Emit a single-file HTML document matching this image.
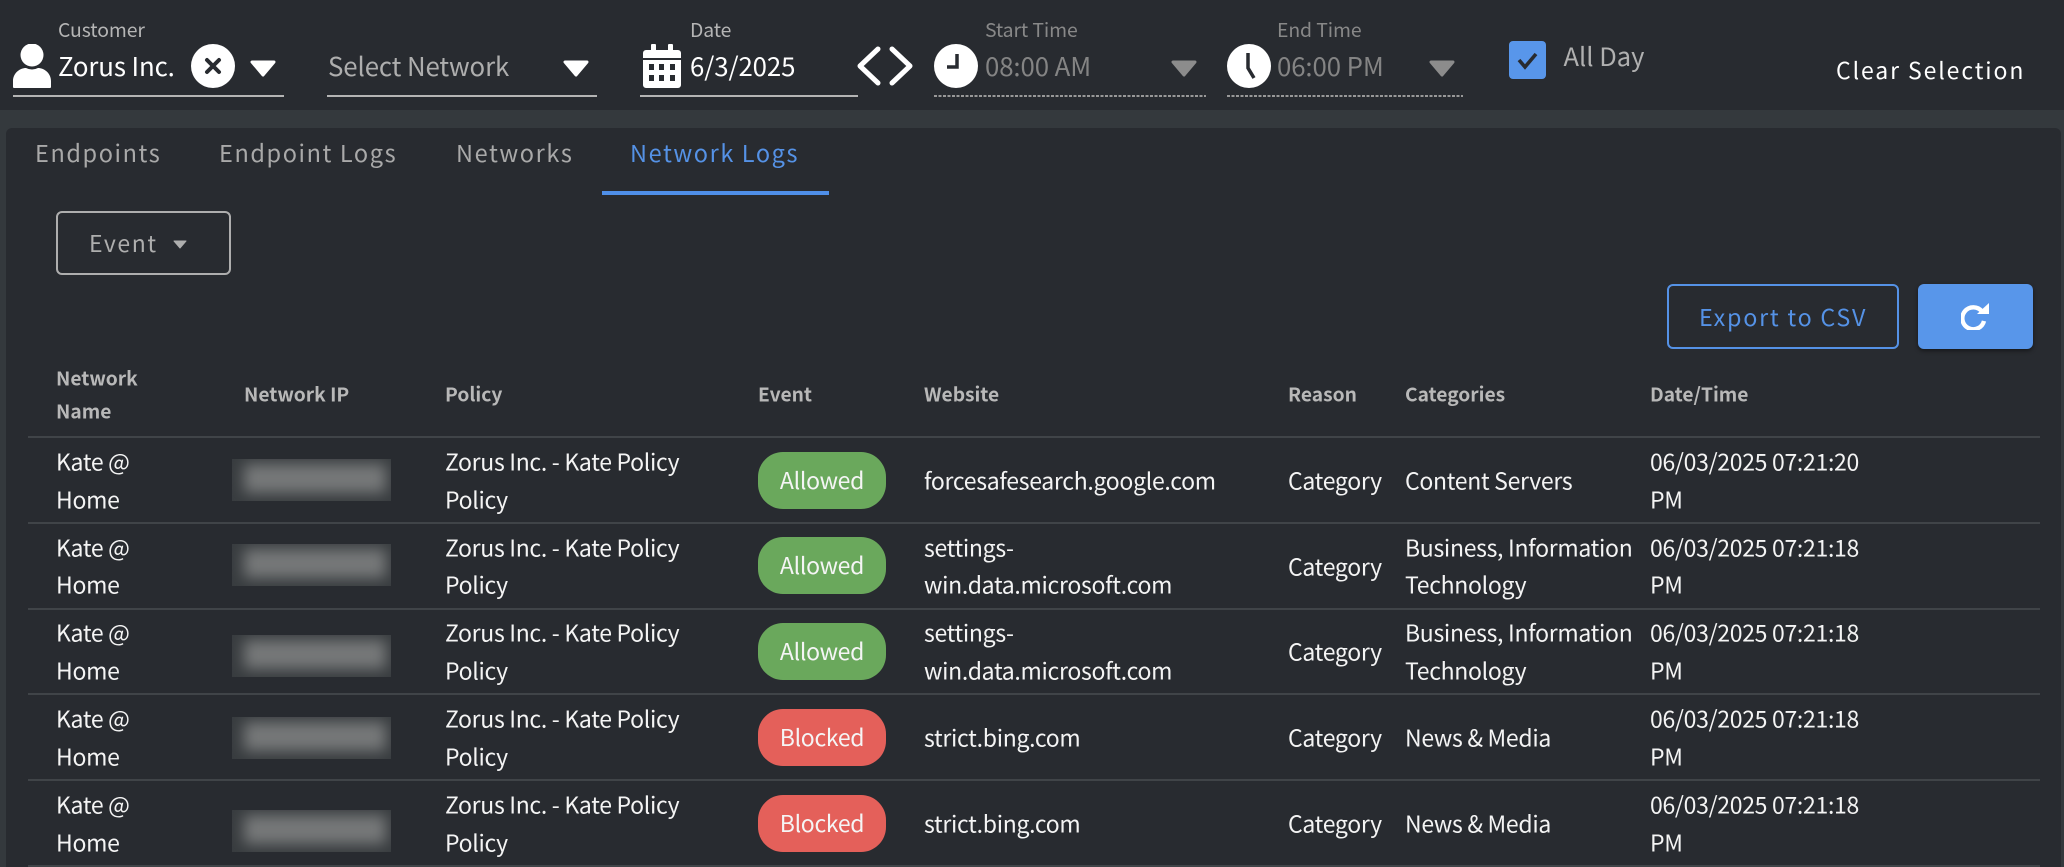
<!DOCTYPE html>
<html><head><meta charset="utf-8"><title>Network Logs</title>
<style>
html,body{margin:0;padding:0;background:#34393d;}
body{position:relative;width:2064px;height:867px;overflow:hidden;font-family:"Noto Sans CJK JP","Liberation Sans",sans-serif;color:#fff}
div,span,svg{position:absolute}
.t{white-space:nowrap;line-height:40px;height:40px}
.b{font-size:23px;letter-spacing:-.3px;color:#f4f4f4;transform:translateY(-1.5px)}
.h{font-size:19.2px;font-weight:700;color:#b8b8b8;transform:translateY(-.7px)}
.l{font-size:19.4px;letter-spacing:-.1px;color:#b5b5b5;transform:translateY(-.8px)}
.m{font-size:25.8px;letter-spacing:-.1px;transform:translateY(-.8px)}
.tab{font-size:23.5px;letter-spacing:1.6px;color:#a9a9a9}
.ul{height:2px;background:#b4b4b4;top:95px}
.dash{height:2px;top:95px;background:repeating-linear-gradient(90deg,#989898 0 3px,transparent 3px 4.5px)}
.line{left:28px;width:2012px;height:2px;background:#404448}
.pill{left:758px;width:128px;height:57px;border-radius:25px;text-align:center;font-size:23px;letter-spacing:-.3px;line-height:54px;color:#f5f5f5}
.al{background:#6aa85c}
.bl{background:#e4605a}
.blur{left:232px;width:159px;height:42px;overflow:hidden;background:#383c3f}
.blur i{position:absolute;left:12px;right:5px;top:5px;bottom:8px;background:#767879;filter:blur(7px);display:block}
</style></head><body>
<div style="left:0;top:0;width:2064px;height:110px;background:#282b30"></div>
<div style="left:6px;top:128px;width:2055px;height:739px;background:#282b30;border-radius:6px 6px 0 0"></div>

<svg style="left:13px;top:44px" width="38" height="44" viewBox="0 0 38 44"><ellipse cx="19" cy="11" rx="11.5" ry="11.5" fill="#fff"/><path d="M1 44a1 1 0 0 1-1-1v-6C0 29 7 24 13 24q6 3 12 0c6 0 13 5 13 13v6a1 1 0 0 1-1 1z" fill="#fff"/></svg>
<div class="t l" style="left:58px;top:10px">Customer</div>
<div class="t m" style="left:58px;top:47px">Zorus Inc.</div>
<svg style="left:191px;top:44px" width="44" height="44" viewBox="0 0 44 44"><circle cx="22" cy="22" r="22" fill="#fff"/><path d="M16 16l12 12M28 16L16 28" stroke="#282b30" stroke-width="4" stroke-linecap="round"/></svg>
<svg style="left:249px;top:60px" width="28" height="18" viewBox="0 0 28 18"><path d="M3 2h22L14 15z" fill="#fff" stroke="#fff" stroke-width="3" stroke-linejoin="round"/></svg>
<div class="ul" style="left:13px;width:271px"></div>

<div class="t m" style="left:328px;top:47px;color:#aeaeae">Select Network</div>
<svg style="left:562px;top:60px" width="28" height="18" viewBox="0 0 28 18"><path d="M3 2h22L14 15z" fill="#fff" stroke="#fff" stroke-width="3" stroke-linejoin="round"/></svg>
<div class="ul" style="left:327px;width:270px"></div>

<svg style="left:643px;top:44px" width="38" height="44" viewBox="0 0 38 44"><path d="M9 0h3a1 1 0 0 1 1 1v5h12V1a1 1 0 0 1 1-1h3a1 1 0 0 1 1 1v5h5a3 3 0 0 1 3 3v5H0V9a3 3 0 0 1 3-3h5V1a1 1 0 0 1 1-1z" fill="#fff"/><path fill-rule="evenodd" d="M0 16h38v25a3 3 0 0 1-3 3H3a3 3 0 0 1-3-3zM6 20v6h5v-6zM16 20v6h5v-6zM27 20v6h5v-6zM6 31v6h5v-6zM16 31v6h5v-6zM27 31v6h5v-6z" fill="#fff"/></svg>
<div class="t l" style="left:690px;top:10px">Date</div>
<div class="t m" style="left:690px;top:47px">6/3/2025</div>
<div class="ul" style="left:640px;width:218px"></div>

<svg style="left:857px;top:46px" width="56" height="40" viewBox="0 0 56 40"><path d="M21 3L3 20l18 17M35 3l18 17-18 17" fill="none" stroke="#fff" stroke-width="5" stroke-linecap="round" stroke-linejoin="round"/></svg>

<svg style="left:934px;top:44px" width="44" height="44" viewBox="0 0 44 44"><circle cx="22" cy="22" r="22" fill="#fff"/><path d="M23 10v13h-10" fill="none" stroke="#282b30" stroke-width="3.5"/></svg>
<div class="t l" style="left:985px;top:10px;color:#888">Start Time</div>
<div class="t m" style="left:985px;top:47px;color:#848484">08:00 AM</div>
<svg style="left:1170px;top:60px" width="28" height="18" viewBox="0 0 28 18"><path d="M3 2h22L14 15z" fill="#8c8c8c" stroke="#8c8c8c" stroke-width="3" stroke-linejoin="round"/></svg>
<div class="dash" style="left:934px;width:272px"></div>

<svg style="left:1227px;top:44px" width="44" height="44" viewBox="0 0 44 44"><circle cx="22" cy="22" r="22" fill="#fff"/><path d="M21 9v15l6 10" fill="none" stroke="#282b30" stroke-width="3.5"/></svg>
<div class="t l" style="left:1277px;top:10px;color:#888">End Time</div>
<div class="t m" style="left:1277px;top:47px;color:#848484">06:00 PM</div>
<svg style="left:1428px;top:60px" width="28" height="18" viewBox="0 0 28 18"><path d="M3 2h22L14 15z" fill="#8c8c8c" stroke="#8c8c8c" stroke-width="3" stroke-linejoin="round"/></svg>
<div class="dash" style="left:1227px;width:236px"></div>

<div style="left:1509px;top:41px;width:37px;height:38px;background:#5896ea;border-radius:4px"></div>
<svg style="left:1509px;top:41px" width="37" height="38" viewBox="0 0 37 38"><path d="M10 19l6 7 11-13" fill="none" stroke="#282b30" stroke-width="3.6"/></svg>
<div class="t" style="left:1563.5px;top:35.5px;color:#b0b0b0;font-size:25.5px">All Day</div>
<div class="t" style="left:1836px;top:49px;font-size:23px;letter-spacing:1.9px;color:#fff">Clear Selection</div>

<div class="t tab" style="left:35px;top:131.5px">Endpoints</div>
<div class="t tab" style="left:219px;top:131.5px">Endpoint Logs</div>
<div class="t tab" style="left:456px;top:131.5px">Networks</div>
<div class="t tab" style="left:630px;top:131.5px;color:#5592e6">Network Logs</div>
<div style="left:602px;top:191px;width:227px;height:4px;background:#4f8fe8"></div>

<div style="left:56px;top:211px;width:171px;height:60px;border:2px solid #aeaeae;border-radius:6px"></div>
<div class="t tab" style="left:89px;top:222px;font-size:23px;color:#aeaeae">Event</div>
<svg style="left:173px;top:240px" width="14" height="9" viewBox="0 0 14 9"><path d="M1 1h12L7 8z" fill="#aeaeae" stroke="#aeaeae" stroke-linejoin="round"/></svg>

<div style="left:1667px;top:284px;width:228px;height:61px;border:2px solid #5592e6;border-radius:6px"></div>
<div class="t tab" style="left:1699px;top:296px;font-size:23.3px;letter-spacing:1.75px;color:#5592e6">Export to CSV</div>
<div style="left:1918px;top:284px;width:115px;height:65px;background:#5896ea;border-radius:6px;box-shadow:0 2px 4px rgba(0,0,0,.45)"></div>
<svg style="left:1961px;top:302px" width="30" height="28" viewBox="0 0 30 28"><path d="M21 9.5A11 11 0 1 0 23 19" fill="none" stroke="#fff" stroke-width="4.4"/><path d="M16 12h12V1z" fill="#fff"/></svg>

<div class="t h" style="left:56px;top:358px">Network</div>
<div class="t h" style="left:56px;top:391px">Name</div>
<div class="t h" style="left:244px;top:374px">Network IP</div>
<div class="t h" style="left:445px;top:374px">Policy</div>
<div class="t h" style="left:758px;top:374px">Event</div>
<div class="t h" style="left:924px;top:374px">Website</div>
<div class="t h" style="left:1288px;top:374px">Reason</div>
<div class="t h" style="left:1405px;top:374px">Categories</div>
<div class="t h" style="left:1650px;top:374px">Date/Time</div>

<div class="line" style="top:436px"></div>
<div class="line" style="top:522px"></div>
<div class="line" style="top:608px"></div>
<div class="line" style="top:693px"></div>
<div class="line" style="top:779px"></div>
<div class="line" style="top:865px"></div>

<!-- Row 1 -->
<div class="t b" style="left:56px;top:442px">Kate @</div>
<div class="t b" style="left:56px;top:480px">Home</div>
<div class="blur" style="top:459px"><i></i></div>
<div class="t b" style="left:445px;top:442px">Zorus Inc. - Kate Policy</div>
<div class="t b" style="left:445px;top:480px">Policy</div>
<div class="pill al" style="top:452px">Allowed</div>
<div class="t b" style="left:924px;top:461px">forcesafesearch.google.com</div>
<div class="t b" style="left:1288px;top:461px">Category</div>
<div class="t b" style="left:1405px;top:461px">Content Servers</div>
<div class="t b" style="left:1650px;top:442px">06/03/2025 07:21:20</div>
<div class="t b" style="left:1650px;top:480px">PM</div>

<!-- Row 2 -->
<div class="t b" style="left:56px;top:528px">Kate @</div>
<div class="t b" style="left:56px;top:565px">Home</div>
<div class="blur" style="top:544px"><i></i></div>
<div class="t b" style="left:445px;top:528px">Zorus Inc. - Kate Policy</div>
<div class="t b" style="left:445px;top:565px">Policy</div>
<div class="pill al" style="top:537px">Allowed</div>
<div class="t b" style="left:924px;top:528px">settings-</div>
<div class="t b" style="left:924px;top:565px">win.data.microsoft.com</div>
<div class="t b" style="left:1288px;top:547px">Category</div>
<div class="t b" style="left:1405px;top:528px">Business, Information</div>
<div class="t b" style="left:1405px;top:565px">Technology</div>
<div class="t b" style="left:1650px;top:528px">06/03/2025 07:21:18</div>
<div class="t b" style="left:1650px;top:565px">PM</div>

<!-- Row 3 -->
<div class="t b" style="left:56px;top:613px">Kate @</div>
<div class="t b" style="left:56px;top:651px">Home</div>
<div class="blur" style="top:635px"><i></i></div>
<div class="t b" style="left:445px;top:613px">Zorus Inc. - Kate Policy</div>
<div class="t b" style="left:445px;top:651px">Policy</div>
<div class="pill al" style="top:623px">Allowed</div>
<div class="t b" style="left:924px;top:613px">settings-</div>
<div class="t b" style="left:924px;top:651px">win.data.microsoft.com</div>
<div class="t b" style="left:1288px;top:632px">Category</div>
<div class="t b" style="left:1405px;top:613px">Business, Information</div>
<div class="t b" style="left:1405px;top:651px">Technology</div>
<div class="t b" style="left:1650px;top:613px">06/03/2025 07:21:18</div>
<div class="t b" style="left:1650px;top:651px">PM</div>

<!-- Row 4 -->
<div class="t b" style="left:56px;top:699px">Kate @</div>
<div class="t b" style="left:56px;top:737px">Home</div>
<div class="blur" style="top:717px"><i></i></div>
<div class="t b" style="left:445px;top:699px">Zorus Inc. - Kate Policy</div>
<div class="t b" style="left:445px;top:737px">Policy</div>
<div class="pill bl" style="top:709px">Blocked</div>
<div class="t b" style="left:924px;top:718px">strict.bing.com</div>
<div class="t b" style="left:1288px;top:718px">Category</div>
<div class="t b" style="left:1405px;top:718px">News &amp; Media</div>
<div class="t b" style="left:1650px;top:699px">06/03/2025 07:21:18</div>
<div class="t b" style="left:1650px;top:737px">PM</div>

<!-- Row 5 -->
<div class="t b" style="left:56px;top:785px">Kate @</div>
<div class="t b" style="left:56px;top:823px">Home</div>
<div class="blur" style="top:810px"><i></i></div>
<div class="t b" style="left:445px;top:785px">Zorus Inc. - Kate Policy</div>
<div class="t b" style="left:445px;top:823px">Policy</div>
<div class="pill bl" style="top:795px">Blocked</div>
<div class="t b" style="left:924px;top:804px">strict.bing.com</div>
<div class="t b" style="left:1288px;top:804px">Category</div>
<div class="t b" style="left:1405px;top:804px">News &amp; Media</div>
<div class="t b" style="left:1650px;top:785px">06/03/2025 07:21:18</div>
<div class="t b" style="left:1650px;top:823px">PM</div>
</body></html>
